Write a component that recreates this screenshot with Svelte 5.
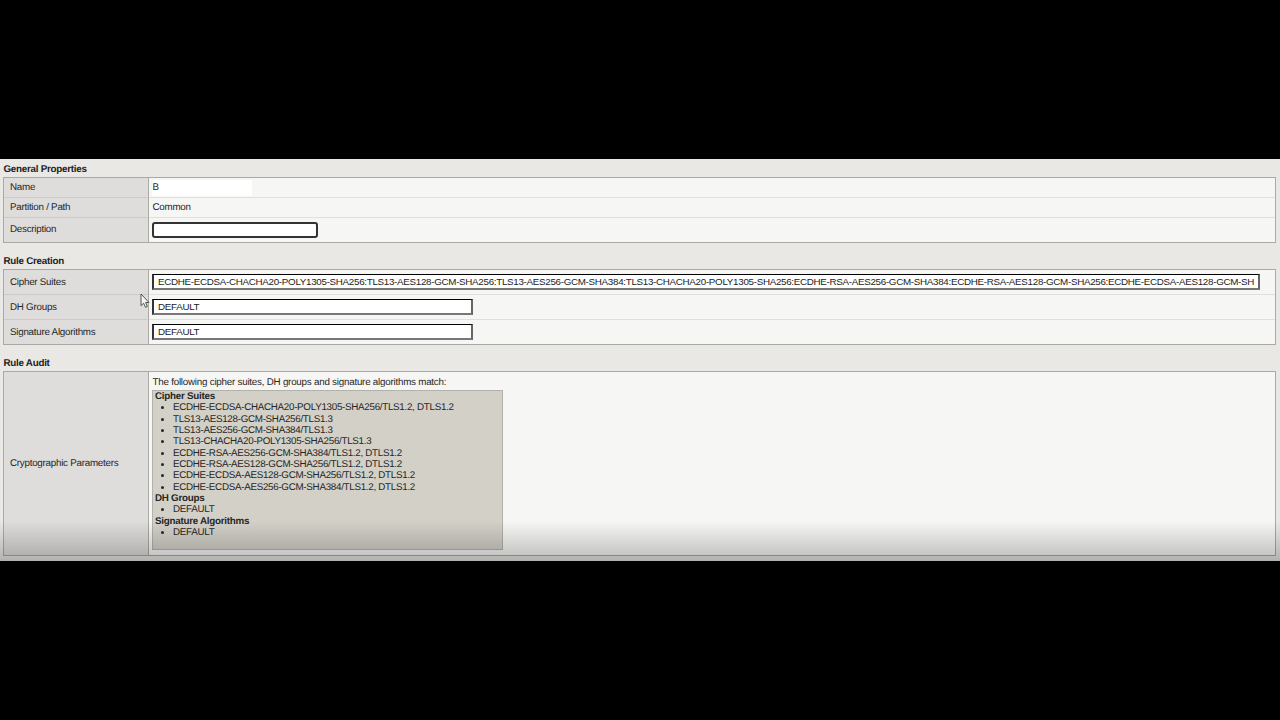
<script lang="ts">
  const cipherRule =
    'ECDHE-ECDSA-CHACHA20-POLY1305-SHA256:TLS13-AES128-GCM-SHA256:TLS13-AES256-GCM-SHA384:TLS13-CHACHA20-POLY1305-SHA256:ECDHE-RSA-AES256-GCM-SHA384:ECDHE-RSA-AES128-GCM-SHA256:ECDHE-ECDSA-AES128-GCM-SH';

  const audit = [
    {
      title: 'Cipher Suites',
      items: [
        'ECDHE-ECDSA-CHACHA20-POLY1305-SHA256/TLS1.2, DTLS1.2',
        'TLS13-AES128-GCM-SHA256/TLS1.3',
        'TLS13-AES256-GCM-SHA384/TLS1.3',
        'TLS13-CHACHA20-POLY1305-SHA256/TLS1.3',
        'ECDHE-RSA-AES256-GCM-SHA384/TLS1.2, DTLS1.2',
        'ECDHE-RSA-AES128-GCM-SHA256/TLS1.2, DTLS1.2',
        'ECDHE-ECDSA-AES128-GCM-SHA256/TLS1.2, DTLS1.2',
        'ECDHE-ECDSA-AES256-GCM-SHA384/TLS1.2, DTLS1.2',
      ],
    },
    { title: 'DH Groups', items: ['DEFAULT'] },
    { title: 'Signature Algorithms', items: ['DEFAULT'] },
  ];

  let description = '';
  let cipherSuites = cipherRule;
  let dhGroups = 'DEFAULT';
  let signatureAlgorithms = 'DEFAULT';
</script>

<div class="screen">
  <main class="panel">
    <h2 class="first">General Properties</h2>
    <section class="grid general">
      <div class="label">Name</div>
      <div class="value"><span class="name">B</span></div>
      <div class="label">Partition / Path</div>
      <div class="value text">Common</div>
      <div class="label">Description</div>
      <div class="value"><input class="description" aria-label="Description" bind:value={description} /></div>
    </section>

    <h2>Rule Creation</h2>
    <section class="grid creation">
      <div class="label">Cipher Suites</div>
      <div class="value"><input class="wide" aria-label="Cipher Suites" bind:value={cipherSuites} /></div>
      <div class="label">DH Groups</div>
      <div class="value"><input aria-label="DH Groups" bind:value={dhGroups} /></div>
      <div class="label">Signature Algorithms</div>
      <div class="value"><input aria-label="Signature Algorithms" bind:value={signatureAlgorithms} /></div>
    </section>

    <h2>Rule Audit</h2>
    <section class="grid audit">
      <div class="label">Cryptographic Parameters</div>
      <div class="value">
        <p>The following cipher suites, DH groups and signature algorithms match:</p>
        <div class="matches">
          {#each audit as group}
            <h3>{group.title}</h3>
            <ul>
              {#each group.items as item}
                <li>{item}</li>
              {/each}
            </ul>
          {/each}
        </div>
      </div>
    </section>

    <div class="shade"></div>
    <svg class="cursor" width="10" height="16" viewBox="0 0 10 16">
      <path d="M1 1V12.6L3.6 10.2L5.5 14.3L7.4 13.4L5.6 9.5H9Z" fill="#f4f4f4" stroke="#444" stroke-width="0.9" />
    </svg>
  </main>
</div>

<style>
  :global(body) {
    background: #000;
  }

  .screen {
    width: 1280px;
    height: 720px;
    box-sizing: border-box;
    padding-top: 159px;
    background: #000;
    overflow: hidden;
  }

  .panel {
    position: relative;
    height: 402px;
    padding: 0 4px 0 3px;
    box-sizing: border-box;
    background: #e9e8e4;
    color: #262626;
    font-family: 'Liberation Sans', Arial, sans-serif;
    font-size: 9.8px;
    letter-spacing: -0.25px;
    text-rendering: geometricPrecision;
  }

  h2 {
    height: 26px;
    margin: 0;
    padding-left: 0.5px;
    box-sizing: border-box;
    font-size: inherit;
    line-height: 38px;
    color: #222;
  }

  h2.first {
    height: 18px;
    line-height: 21px;
  }

  .grid {
    display: grid;
    grid-template-columns: 145px 1fr;
    box-sizing: border-box;
    border: 1px solid #a9a9a6;
  }

  .general {
    grid-template-rows: 20px 20px 24px;
  }

  .creation {
    grid-template-rows: 25px 25px 24px;
  }

  .audit {
    grid-template-rows: 183px;
  }

  .label,
  .value {
    display: flex;
    align-items: center;
    box-sizing: border-box;
    border-bottom: 1px solid #dfdfdd;
  }

  .label {
    padding: 0 0 1px 6px;
    background: #dedddb;
    border-right: 1px solid #a9a9a6;
    border-bottom-color: #cccbc8;
  }

  .creation .label {
    padding-bottom: 0;
  }

  .value {
    min-width: 0;
    padding-left: 3px;
    background: #f6f6f4;
  }

  .value.text {
    padding: 0 0 1px 3.5px;
  }

  .label:nth-last-child(2),
  .value:last-child {
    border-bottom: none;
  }

  .name {
    width: 100px;
    height: 16px;
    box-sizing: border-box;
    padding-left: 0.5px;
    line-height: 16px;
    background: #fff;
  }

  input {
    width: 321px;
    height: 16px;
    box-sizing: border-box;
    margin: 0;
    padding: 0 4px;
    border: 2px solid #333;
    border-top: 1px solid #000;
    border-right-color: #666;
    border-bottom-color: #777;
    background: #fff;
    color: #222;
    font: inherit;
    letter-spacing: -0.299px;
    outline: none;
  }

  input.wide {
    width: 1108px;
  }

  input.description {
    width: 166px;
    height: 16px;
    border: 2px solid #333;
    border-radius: 3px;
  }

  .audit .value {
    flex-direction: column;
    align-items: flex-start;
  }

  p {
    margin: 0;
    padding: 4px 0 0 0.5px;
    height: 14px;
    line-height: 14px;
    letter-spacing: -0.23px;
  }

  .matches {
    width: 351px;
    height: 160px;
    box-sizing: border-box;
    border: 1px solid #b2b1aa;
    background: #d2d0c7;
    padding-left: 2px;
    line-height: 11.33px;
  }

  h3 {
    margin: 0;
    font-size: inherit;
  }

  ul {
    margin: 0;
    padding-left: 18px;
    letter-spacing: -0.285px;
  }

  /* player controls fade over the lower edge */
  .shade {
    position: absolute;
    left: 0;
    right: 0;
    bottom: 0;
    height: 40px;
    background: linear-gradient(rgba(0, 0, 0, 0), rgba(0, 0, 0, 0.23));
    pointer-events: none;
  }

  .cursor {
    position: absolute;
    left: 140px;
    top: 134px;
  }
</style>
